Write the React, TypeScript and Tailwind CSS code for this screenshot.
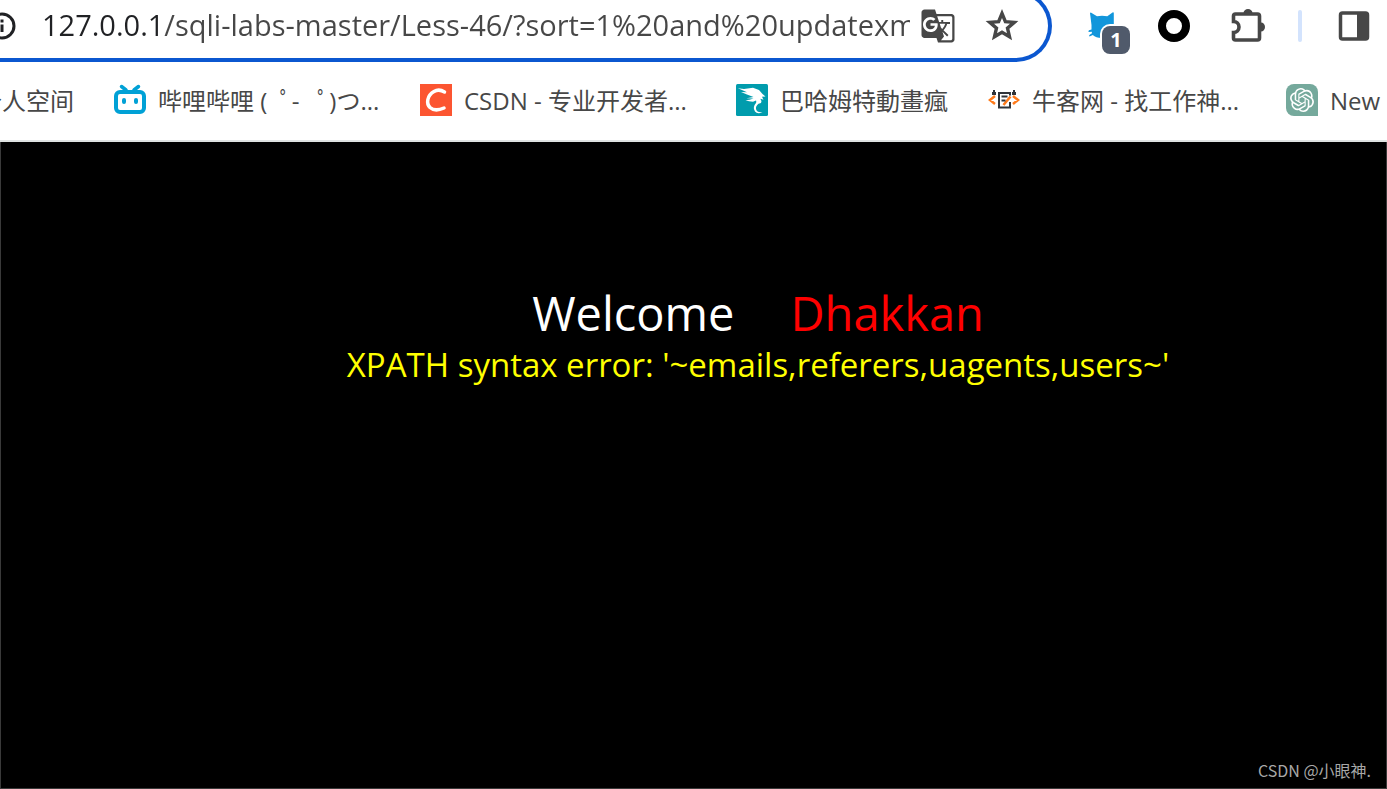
import type { ReactNode } from "react";
import { MdGTranslate } from "react-icons/md";
import { SiOpenai } from "react-icons/si";

const URL_TEXT =
  "127.0.0.1/sqli-labs-master/Less-46/?sort=1%20and%20updatexml(1,concat(0x7e,(select%20group_concat(table_name)))";

function InfoIcon() {
  return (
    <svg className="size-7" viewBox="0 0 28 28" fill="none" stroke="#202124">
      <circle cx="14" cy="14" r="12" strokeWidth="3" />
      <path d="M14 12.5v7.5M14 7.5v3" strokeWidth="3" />
    </svg>
  );
}

function StarIcon() {
  return (
    <svg className="size-9" viewBox="0 0 36 36" fill="none" stroke="#474747" strokeWidth="3.400">
      <path d="m18 5.500 3.400 8.100 8.800.8-6.700 5.700 2 8.600L18 24.200l-7.500 4.500 2-8.600-6.700-5.700 8.800-.8Z" />
    </svg>
  );
}

function CatIcon() {
  return (
    <svg className="size-8" viewBox="0 0 32 32" fill="#1296db">
      <path d="M4 3.200q.3-1 1.200-.5L11 6.200q5-1 10.300 0L26.500 2.500q1.300-.6 1.300.8V22q-5 6-12 6-6 0-9-3l-3.300 1.500q-1-.8.200-1.700l2.300-1.500-.2-1.500-3 .2q-1-.8.200-1.700l2.500-.8V15Q4.800 9 4 3.200Z" />
    </svg>
  );
}

function PuzzleIcon() {
  return (
    <svg className="size-9" viewBox="0 0 36 36">
      <path d="M13.500 5a4.500 4 0 0 1 9 0ZM31 14.500a4 4.500 0 0 1 0 9Z" fill="#474747" />
      <path
        d="M5.500 6h22q2 0 2 2v22q0 2-2 2h-22q-2 0-2-2v-5.500a5.500 5.500 0 0 0 0-11V8q0-2 2-2Z"
        fill="none"
        stroke="#474747"
        strokeWidth="3.600"
      />
    </svg>
  );
}

function SidePanelIcon() {
  return (
    <svg className="size-8" viewBox="0 0 32 32">
      <rect x="2.500" y="3" width="27" height="26" rx="2" fill="none" stroke="#474747" strokeWidth="3.500" />
      <path d="M19 3h10v26H19Z" fill="#474747" />
    </svg>
  );
}

function BilibiliIcon() {
  return (
    <svg className="size-8 shrink-0" viewBox="0 0 32 32" fill="none" stroke="#00a1d6" strokeLinecap="round">
      <path d="M7.500 2.500 12 6M24.500 2.500 20 6" strokeWidth="3.500" />
      <rect x="2" y="8" width="28" height="20" rx="4" strokeWidth="4" />
      <path d="M10 16v2M22 16v2" strokeWidth="4" />
    </svg>
  );
}

function CsdnIcon() {
  return (
    <svg className="size-8 shrink-0" viewBox="0 0 32 32">
      <path d="M0 0h32v32H0Z" fill="#fc5531" />
      <path
        d="M24.500 8Q19 4.500 14 7.500C7 11.500 6 19.500 10 23.500q5 4.500 14 .5"
        fill="none"
        stroke="#fff"
        strokeWidth="3.500"
        strokeLinecap="round"
      />
    </svg>
  );
}

function DragonIcon() {
  return (
    <svg className="size-8 shrink-0" viewBox="0 0 32 32" fill="#fff">
      <rect width="32" height="32" rx="1.500" fill="#009cad" />
      <path d="M2 4.200 8 5 17 3.800 23 6l3.500 4 3 2.500-3.500.2 1.500 3-3-1-1 2.500-2.500 1.500-1-2.200-3 1.200-4-.5-3.500-1 4-.5 4-1.200-7-.2 7-1.300L11 10.500 5 8l6 .2Z" />
      <path d="m21 16 3-1.500 1.500 2.500-.5 2-2.500.8Q19.500 22 20 25q1 4 6.500 3.200-5 2.500-7.500-.7-3-4 1-8.500Z" />
    </svg>
  );
}

function NowcoderIcon() {
  return (
    <svg className="size-8 shrink-0" viewBox="0 0 32 32" fill="none">
      <path d="m7 12-5 4 5 4M25 12l5 4-5 4M22.500 12.500l-7 8.500" stroke="#ff7a1a" strokeWidth="2.500" />
      <path
        d="M22 11.500V9H11v14.500h11V18M6 6v5M26 6v5M13.500 12.500h6M13.500 16.500h4"
        stroke="#30343a"
        strokeWidth="2"
      />
      <path d="M4 8h4v3H4ZM24 8h4v3h-4Z" fill="#30343a" />
    </svg>
  );
}

function OpenAiIcon() {
  return (
    <span className="flex size-8 shrink-0 items-center justify-center rounded-lg rounded-br-none bg-[#75a99c]">
      <SiOpenai className="size-6 text-white" />
    </span>
  );
}

interface BookmarkProps {
  icon?: ReactNode;
  label: string;
  className: string;
}

function Bookmark(props: BookmarkProps) {
  return (
    <a href="#" className={`flex shrink-0 items-center gap-3 whitespace-pre ${props.className}`}>
      {props.icon}
      <span className="pt-0.5">{props.label}</span>
    </a>
  );
}

export default function App() {
  return (
    <div className="flex min-h-screen flex-col overflow-hidden bg-white font-['Open_Sans','Noto_Sans_CJK_SC',sans-serif]">
      <header className="border-b-2 border-[#dfe3e2]">
        <div className="flex h-[62px] items-end overflow-hidden">
          <div className="-ml-3 flex h-[72px] min-w-0 flex-1 items-center rounded-r-full border-4 border-l-0 border-[#0b57d0] pr-7">
            <button aria-label="View site information">
              <InfoIcon />
            </button>
            <input
              type="text"
              aria-label="Address"
              defaultValue={URL_TEXT}
              className="ml-[26px] h-10 min-w-0 flex-1 bg-[linear-gradient(to_right,#202124_119px,#474747_119px)] bg-clip-text pb-0.5 text-[29px] text-transparent outline-none"
            />
            <button aria-label="Translate this page" className="ml-2.5">
              <MdGTranslate className="size-9 text-[#474747]" />
            </button>
            <button aria-label="Bookmark this page" className="ml-7">
              <StarIcon />
            </button>
          </div>
          <div className="flex h-[72px] items-center pr-[17px] pl-[34px]">
            <button aria-label="Cat extension" className="relative mr-10">
              <CatIcon />
              <span className="absolute top-4 left-4 flex size-7 items-center justify-center rounded-lg bg-[#505a6b] text-xl font-bold text-white ring-2 ring-white">
                1
              </span>
            </button>
            <button aria-label="Ring extension" className="mr-10 size-8 rounded-full border-8 border-black" />
            <button aria-label="Extensions" className="mr-8">
              <PuzzleIcon />
            </button>
            <div className="mr-9 h-8 w-1 rounded-full bg-[#d3e3fd]" />
            <button aria-label="Side panel">
              <SidePanelIcon />
            </button>
          </div>
        </div>
        <nav className="flex h-[78px] overflow-hidden pb-0.5 text-2xl text-[#474747]">
          <Bookmark label="个人空间" className="-ml-[22px] w-[136px]" />
          <Bookmark icon={<BilibiliIcon />} label="哔哩哔哩 (  ﾟ-   ﾟ)つ..." className="w-[306px]" />
          <Bookmark icon={<CsdnIcon />} label="CSDN - 专业开发者..." className="w-[316px]" />
          <Bookmark icon={<DragonIcon />} label="巴哈姆特動畫瘋" className="w-[252px]" />
          <Bookmark icon={<NowcoderIcon />} label="牛客网 - 找工作神..." className="w-[298px]" />
          <Bookmark icon={<OpenAiIcon />} label="New" className="" />
        </nav>
      </header>
      <main className="flex flex-1 flex-col border border-t-0 border-[#3a3a3a] bg-black">
        <div className="mt-[140px] pl-[129px] text-center">
          <h1 className="flex justify-center gap-14 text-[47px] leading-[62px] text-white">
            <span>Welcome</span>
            <span className="text-[#ff0000]">Dhakkan</span>
          </h1>
          <p className="text-[33px] leading-[42px] text-[#ffff00]">
            XPATH syntax error: '~emails,referers,uagents,users~'
          </p>
        </div>
        <footer className="mt-auto pr-[15px] pb-1.5 text-right font-['Noto_Sans_CJK_SC',sans-serif] text-base text-[#a8a8a8]">
          CSDN @小眼神.
        </footer>
      </main>
    </div>
  );
}
